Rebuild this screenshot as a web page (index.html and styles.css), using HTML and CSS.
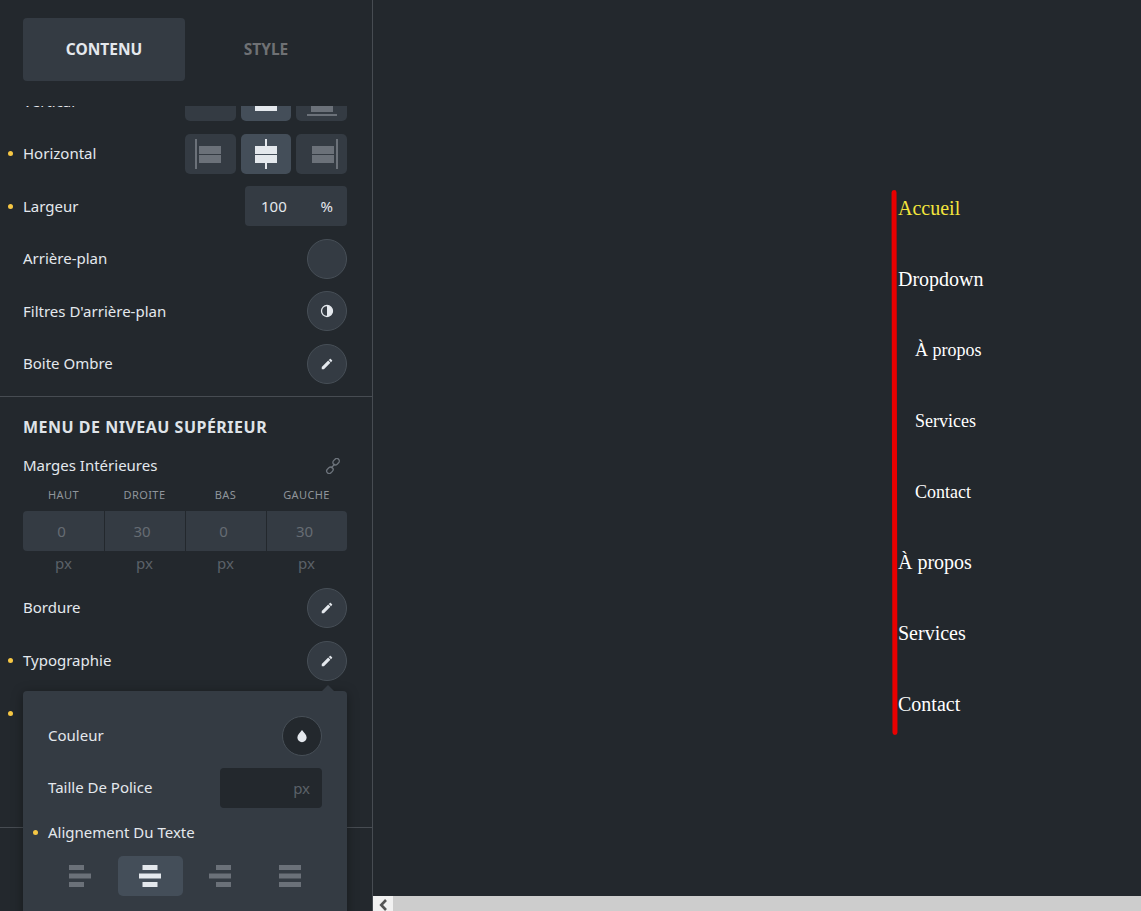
FILE: index.html
```html
<!DOCTYPE html>
<html lang="fr">
<head>
<meta charset="utf-8">
<title>Menu</title>
<link rel="stylesheet" href="styles.css">
</head>
<body>
<div class="app">
  <aside class="sidebar">
    <div class="tabs">
      <div class="tab active">CONTENU</div>
      <div class="tab">STYLE</div>
    </div>
    <div class="scroll">
      <div class="scroll-inner">
        <div class="rows first">
          <div class="row">
            <span class="label">Vertical</span>
            <div class="btn-group">
              <button class="seg"><svg width="32" height="32" viewBox="0 0 32 32"><rect x="1" y="1" width="30" height="2" class="dim"/><rect x="5" y="4" width="22" height="8" class="dim"/><rect x="5" y="13" width="22" height="8" class="dim"/></svg></button>
              <button class="seg on"><svg width="32" height="32" viewBox="0 0 32 32"><rect x="1" y="15.500" width="30" height="1" class="lit"/><rect x="5" y="6" width="22" height="9" class="lit"/><rect x="5" y="17" width="22" height="9" class="lit"/></svg></button>
              <button class="seg"><svg width="32" height="32" viewBox="0 0 32 32"><rect x="5" y="9" width="22" height="8" class="dim"/><rect x="5" y="18" width="22" height="9" class="dim"/><rect x="1" y="29" width="30" height="2" class="dim"/></svg></button>
            </div>
          </div>
          <div class="row dot">
            <span class="label">Horizontal</span>
            <div class="btn-group">
              <button class="seg"><svg width="32" height="32" viewBox="0 0 32 32"><rect x="0" y="1" width="2" height="30" class="dim"/><rect x="4" y="8" width="22" height="8" class="dim"/><rect x="4" y="17" width="22" height="8" class="dim"/></svg></button>
              <button class="seg on"><svg width="32" height="32" viewBox="0 0 32 32"><rect x="15" y="1" width="2" height="7" class="lit"/><rect x="15" y="25" width="2" height="6" class="lit"/><rect x="5" y="8" width="22" height="8" class="lit"/><rect x="5" y="17" width="22" height="8" class="lit"/></svg></button>
              <button class="seg"><svg width="32" height="32" viewBox="0 0 32 32"><rect x="30" y="1" width="2" height="30" class="dim"/><rect x="6" y="8" width="22" height="8" class="dim"/><rect x="6" y="17" width="22" height="8" class="dim"/></svg></button>
            </div>
          </div>
          <div class="row dot">
            <span class="label">Largeur</span>
            <div class="unit-input"><span class="val">100</span><span class="unit">%</span></div>
          </div>
          <div class="row">
            <span class="label">Arrière-plan</span>
            <button class="circle"></button>
          </div>
          <div class="row">
            <span class="label">Filtres D'arrière-plan</span>
            <button class="circle"><svg width="14" height="14" viewBox="0 0 14 14"><circle cx="7" cy="7" r="5.500" fill="none" stroke="#e4e8ed" stroke-width="1.300"/><path d="M7 1.500a5.500 5.500 0 0 1 0 11z" fill="#e4e8ed"/></svg></button>
          </div>
          <div class="row">
            <span class="label">Boite Ombre</span>
            <button class="circle"><svg width="14" height="14" viewBox="0 0 24 24"><path class="lit" d="M3 17.25V21h3.75L17.81 9.94l-3.75-3.75L3 17.25zM20.71 7.04c.39-.39.39-1.02 0-1.41l-2.34-2.34c-.39-.39-1.02-.39-1.41 0l-1.83 1.83 3.75 3.75 1.83-1.83z"/></svg></button>
          </div>
        </div>
        <hr class="divider">
        <section class="group">
          <h2 class="heading">MENU DE NIVEAU SUPÉRIEUR</h2>
          <div class="padding-head">
            <span class="label">Marges Intérieures</span>
            <svg class="link" width="16" height="16" viewBox="0 0 16 16" fill="none" stroke="#6d747c" stroke-width="1.300"><rect x="7.600" y="1.200" width="7" height="5" rx="2.500" transform="rotate(-45 11.100 3.700)"/><rect x="1.400" y="9.800" width="7" height="5" rx="2.500" transform="rotate(-45 4.900 12.300)"/><path d="M6 10l4-4"/></svg>
          </div>
          <div class="quad-labels"><span>HAUT</span><span>DROITE</span><span>BAS</span><span>GAUCHE</span></div>
          <div class="quad"><span>0</span><span>30</span><span>0</span><span>30</span></div>
          <div class="quad-units"><span>px</span><span>px</span><span>px</span><span>px</span></div>
          <div class="rows lower">
            <div class="row">
              <span class="label">Bordure</span>
              <button class="circle"><svg width="14" height="14" viewBox="0 0 24 24"><path class="lit" d="M3 17.25V21h3.75L17.81 9.94l-3.75-3.75L3 17.25zM20.71 7.04c.39-.39.39-1.02 0-1.41l-2.34-2.34c-.39-.39-1.02-.39-1.41 0l-1.83 1.83 3.75 3.75 1.83-1.83z"/></svg></button>
            </div>
            <div class="row dot anchor">
              <span class="label">Typographie</span>
              <button class="circle"><svg width="14" height="14" viewBox="0 0 24 24"><path class="lit" d="M3 17.25V21h3.75L17.81 9.94l-3.75-3.75L3 17.25zM20.71 7.04c.39-.39.39-1.02 0-1.41l-2.34-2.34c-.39-.39-1.02-.39-1.41 0l-1.83 1.83 3.75 3.75 1.83-1.83z"/></svg></button>
              <div class="popover">
                <div class="pop-row">
                  <span class="label">Couleur</span>
                  <button class="circle dark"><svg width="12" height="14" viewBox="0 0 14 16"><path class="lit" d="M7 1c2.400 3 5.400 5.600 5.400 8.800a5.400 5.400 0 0 1-10.800 0C1.600 6.600 4.600 4 7 1z"/></svg></button>
                </div>
                <div class="pop-row">
                  <span class="label">Taille De Police</span>
                  <div class="size-input">px</div>
                </div>
                <div class="pop-label dot-in"><span class="label">Alignement Du Texte</span></div>
                <div class="align-grid">
                  <button class="align"><svg width="24" height="24" viewBox="0 0 24 24"><rect x="1" y="1" width="15" height="5" class="dim"/><rect x="1" y="9.500" width="22" height="5" class="dim"/><rect x="1" y="18" width="15" height="5" class="dim"/></svg></button>
                  <button class="align on"><svg width="24" height="24" viewBox="0 0 24 24"><rect x="4.500" y="1" width="15" height="5" class="lit"/><rect x="1" y="9.500" width="22" height="5" class="lit"/><rect x="4.500" y="18" width="15" height="5" class="lit"/></svg></button>
                  <button class="align"><svg width="24" height="24" viewBox="0 0 24 24"><rect x="8" y="1" width="15" height="5" class="dim"/><rect x="1" y="9.500" width="22" height="5" class="dim"/><rect x="8" y="18" width="15" height="5" class="dim"/></svg></button>
                  <button class="align"><svg width="24" height="24" viewBox="0 0 24 24"><rect x="1" y="1" width="22" height="5" class="dim"/><rect x="1" y="9.500" width="22" height="5" class="dim"/><rect x="1" y="18" width="22" height="5" class="dim"/></svg></button>
                </div>
              </div>
            </div>
            <div class="row dot"></div>
          </div>
          <hr class="divider late">
        </section>
      </div>
    </div>
  </aside>
  <main class="stage">
    <div class="canvas">
      <nav class="menu">
        <a class="item current">Accueil</a>
        <a class="item">Dropdown</a>
        <a class="item sub">À propos</a>
        <a class="item sub">Services</a>
        <a class="item sub">Contact</a>
        <a class="item">À propos</a>
        <a class="item">Services</a>
        <a class="item">Contact</a>
      </nav>
    </div>
    <div class="hscroll">
      <div class="arrow"><svg width="9" height="12" viewBox="0 0 9 12"><path d="M7 1L2.200 6 7 11" fill="none" stroke="#555" stroke-width="2.600"/></svg></div>
    </div>
  </main>
</div>
</body>
</html>
```
FILE: styles.css
```css
* { box-sizing: border-box; }
html, body { margin: 0; height: 100%; overflow: hidden; }
body { background: #23282d; font-family: "Noto Sans", sans-serif; color: #e4e8ed; }
button { border: 0; padding: 0; margin: 0; font: inherit; color: inherit; }
svg { display: block; }
.dim { fill: #6b7179; }
.lit { fill: #e4e8ed; }

.app { display: flex; height: 911px; }
.sidebar { width: 373px; flex: none; border-right: 1px solid #474c52; background: #23282d; display: flex; flex-direction: column; height: 100%; }

.tabs { height: 106px; flex: none; padding: 18px 25px 0 23px; display: flex; }
.tab { width: 162px; height: 63px; padding-bottom: 2px; border-radius: 4px; display: flex; align-items: center; justify-content: center; font-size: 15.5px; font-weight: 700; color: #6f7174; }
.tab.active { background: #343b43; color: #e4e8ed; }

.scroll { flex: 1; overflow: hidden; position: relative; }
.scroll-inner { margin-top: -25px; }

.rows { display: flex; flex-direction: column; gap: 12.5px; }
.row { position: relative; height: 40px; padding: 0 25px 0 23px; display: flex; align-items: center; justify-content: space-between; }
.label { font-size: 15px; color: #e4e8ed; white-space: nowrap; margin-bottom: 1px; }
.dot::before { content: ""; position: absolute; left: 8px; top: 50%; width: 5px; height: 5px; margin-top: -2.5px; border-radius: 50%; background: #f6c744; }

.btn-group { display: flex; gap: 5px; }
.seg { width: 51px; height: 40px; border-radius: 5px; background: #343b43; display: flex; align-items: center; justify-content: center; }
.seg.on { background: #444e59; width: 50px; }
.unit-input { width: 102px; height: 40px; border-radius: 4px; background: #343b43; display: flex; align-items: center; font-size: 15px; padding: 0 14px 0 16px; justify-content: space-between; }
.circle { width: 40px; height: 40px; border-radius: 50%; background: #343b43; border: 1px solid #474f57; display: flex; align-items: center; justify-content: center; }
.circle.dark { background: #23282d; }

.divider { margin: 12px 0 0; border: 0; border-top: 1px solid #474c52; }
.divider.late { margin-top: 93px; }

.heading { margin: 21px 25px 0 23px; font-size: 16px; line-height: 18px; font-weight: 700; color: #dfe3e8; letter-spacing: 0.5px; }
.padding-head { margin: 20px 25px 0 23px; height: 20px; padding-right: 6px; display: flex; align-items: center; justify-content: space-between; }
.quad-labels, .quad, .quad-units { margin: 0 25px 0 23px; display: grid; grid-template-columns: repeat(4, 1fr); text-align: center; }
.quad-labels { margin-top: 12px; font-size: 11px; line-height: 14px; color: #8f959b; letter-spacing: 0.4px; }
.quad { margin-top: 9px; height: 40px; background: #343b43; border-radius: 4px; overflow: hidden; font-size: 15px; line-height: 40px; color: #666c73; }
.quad span { padding-right: 5px; }
.quad span + span { border-left: 1px solid #23282d; }
.quad span:first-child { border-right: 1px solid #23282d; margin-right: -1px; padding-right: 4px; }
.quad span:nth-child(2) { border-left: 0; }
.quad-units { margin-top: 3px; font-size: 15px; line-height: 18px; color: #5b6168; }
.rows.lower { margin-top: 16px; gap: 13px; }

.anchor { z-index: 2; }
.popover { position: absolute; left: 23px; top: 50px; width: 324px; height: 260px; background: #343b43; border-radius: 4px; padding: 25px; box-shadow: 0 2px 12px rgba(0,0,0,.35); }
.popover::before { content: ""; position: absolute; right: 13px; top: -6px; border: 6px solid transparent; border-top: 0; border-bottom-color: #343b43; }
.pop-row { height: 40px; display: flex; align-items: center; justify-content: space-between; margin-bottom: 12px; }
.size-input { width: 102px; height: 40px; border-radius: 4px; background: #23282d; color: #5b6168; font-size: 15px; display: flex; align-items: center; justify-content: flex-end; padding-right: 12px; }
.pop-label { position: relative; height: 20px; margin-top: 15px; display: flex; align-items: center; }
.dot-in::before { content: ""; position: absolute; left: -15px; top: 50%; width: 5px; height: 5px; margin-top: -2.5px; border-radius: 50%; background: #f6c744; }
.align-grid { margin-top: 13px; display: grid; grid-template-columns: repeat(4, 1fr); gap: 5px; }
.align { height: 40px; border-radius: 5px; background: transparent; display: flex; align-items: center; justify-content: center; }
.align.on { background: #444e59; }

.stage { flex: 1; min-width: 0; display: flex; flex-direction: column; }
.canvas { flex: 1; min-height: 0; padding: 190px 0 0 519px; }
.menu { position: relative; width: 200px; height: 545px; padding-left: 6px; display: flex; flex-direction: column; font-family: "Liberation Serif", serif; }
.menu::before { content: ""; position: absolute; left: 0; top: 0; width: 5px; height: 545px; border-radius: 2.5px; background: #e80000; transform: rotate(-0.1deg); }
.item { flex: none; display: flex; align-items: center; height: 70.7px; font-size: 20px; color: #fff; white-space: nowrap; }
.item:first-child { height: 36px; margin-bottom: 18.6px; }
.item.current { color: #f3e53c; }
.item.sub { font-size: 18px; padding-left: 17px; }
.hscroll { height: 15px; flex: none; background: #cdcdcd; }
.arrow { width: 20px; height: 15px; background: #f1f1f1; padding-top: 3px; overflow: hidden; display: flex; align-items: center; justify-content: center; }
```
